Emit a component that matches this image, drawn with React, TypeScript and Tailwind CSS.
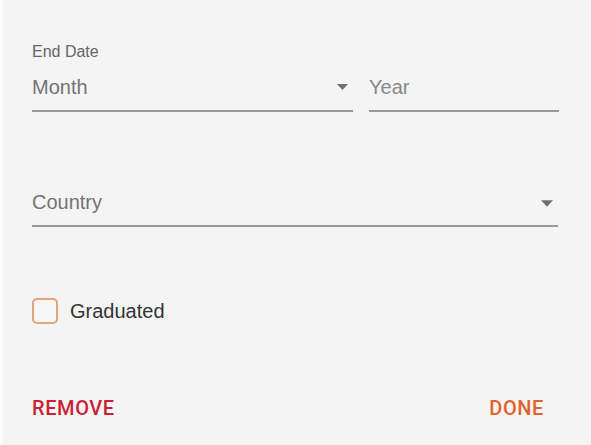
const ArrowDown = ({ className }: { className?: string }) => (
  <svg viewBox="0 0 11 6" className={className} fill="currentColor">
    <path d="M0 0h11L5.5 6z" />
  </svg>
);

const App = () => {
  return (
    <div className="w-[591px] h-[445px] bg-[#f4f4f4] border-l-[3px] border-[#fafafa] pl-[29px] pr-8 pt-[43px] font-['Liberation_Sans',Arial,sans-serif]">
      <div className="text-[16px] leading-[18px] text-[#666]">End Date</div>

      <div className="flex gap-4">
        <div className="flex-1 h-[51px] flex items-end justify-between pb-[11px] border-b-2 border-[#999]">
          <span className="text-[20px] leading-[24px] text-[#737373]">Month</span>
          <ArrowDown className="w-[11px] h-[6px] mb-[9px] mr-[5px] text-[#707070]" />
        </div>
        <div className="w-[190px] h-[51px] flex items-end pb-[11px] border-b-2 border-[#999]">
          <span className="text-[20px] leading-[24px] text-[#888]">Year</span>
        </div>
      </div>

      <div className="mt-[64px] h-[51px] flex items-end justify-between pb-[11px] border-b-2 border-[#999] mr-px">
        <span className="text-[20px] leading-[24px] text-[#737373]">Country</span>
        <ArrowDown className="w-[12px] h-[7px] mb-[7px] mr-[5px] text-[#707070]" />
      </div>

      <label className="mt-[71px] flex items-center gap-3 h-[26px]">
        <span className="w-[26px] h-[26px] rounded-[5px] border-2 border-[#e3a47c] bg-[#f7f7f7]" />
        <span className="text-[20px] leading-[24px] text-[#333]">Graduated</span>
      </label>

      <div className="mt-[72px] flex justify-between pr-[15px] font-['Roboto',sans-serif] font-medium text-[20px] leading-[24px] tracking-[0.6px]">
        <button className="text-[#cc1f36]">REMOVE</button>
        <button className="text-[#e0622a]">DONE</button>
      </div>
    </div>
  );
};

export default App;
